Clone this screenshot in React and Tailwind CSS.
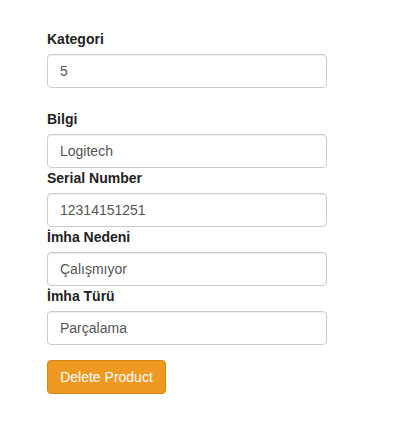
const fields = [
  { label: "Bilgi", value: "Logitech" },
  { label: "Serial Number", value: "12314151251" },
  { label: "İmha Nedeni", value: "Çalışmıyor" },
  { label: "İmha Türü", value: "Parçalama" },
];

function Field({ label, value }) {
  return (
    <div className="flex flex-col">
      <label className="mb-[5px] h-5 text-sm font-bold leading-5 text-[#222]">{label}</label>
      <input
        readOnly
        value={value}
        className="h-[34px] w-[280px] rounded border border-[#ccc] bg-white px-3 text-sm text-[#555] shadow-[inset_0_1px_1px_rgba(0,0,0,0.075)] outline-none"
      />
    </div>
  );
}

export default function App() {
  return (
    <div className="min-h-[443px] bg-white pl-[47px] pt-[29px] font-['Liberation_Sans',Arial,sans-serif]">
      <form className="flex flex-col">
        <Field label="Kategori" value="5" />
        <div className="mt-[21px] flex flex-col">
          {fields.map((f) => (
            <Field key={f.label} label={f.label} value={f.value} />
          ))}
        </div>
        <div className="mt-[15px]">
          <button
            type="button"
            className="h-[34px] w-[119px] rounded border border-[#d58512] bg-[#ee9a22] text-sm text-white"
          >
            Delete Product
          </button>
        </div>
      </form>
    </div>
  );
}
